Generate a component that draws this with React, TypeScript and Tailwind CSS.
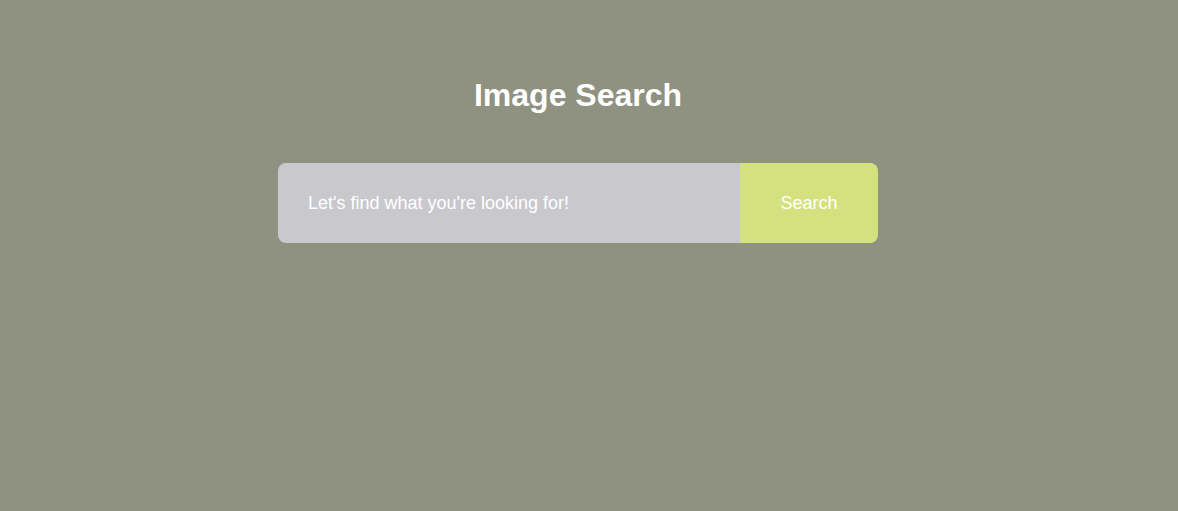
import React from 'react';

const App = () => {
  return (
    <div
      className="min-h-screen bg-[#8f9281] flex flex-col items-center pt-[75px] pr-[22px]"
      style={{ fontFamily: '"Liberation Sans", Arial, sans-serif' }}
    >
      <h1 className="text-[32px] leading-[40px] font-bold text-white">Image Search</h1>

      <form className="mt-[48px] w-[600px] h-[80px] flex rounded-lg overflow-hidden">
        <input
          type="text"
          placeholder="Let's find what you're looking for!"
          className="flex-1 bg-[#c9c8cd] px-[30px] text-[18px] text-white placeholder:text-white outline-none"
        />
        <button type="button" className="w-[138px] bg-[#d4e17f] text-white text-[18px]">
          Search
        </button>
      </form>
    </div>
  );
};

export default App;
